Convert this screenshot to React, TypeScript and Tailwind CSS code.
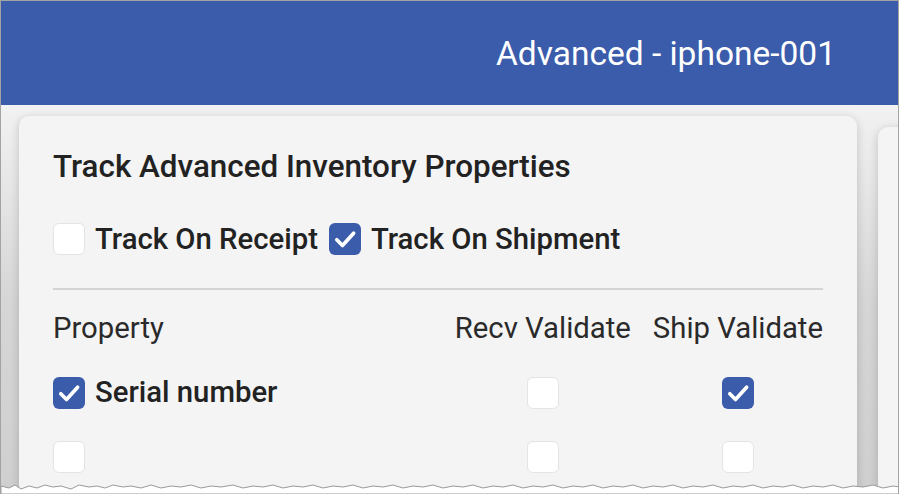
import React from "react";

function Box({ checked }: { checked?: boolean }) {
  return checked ? (
    <div className="w-[32px] h-[32px] shrink-0 rounded-[6px] bg-[#3b5bab] flex items-center justify-center">
      <svg width="32" height="32" viewBox="0 0 32 32" fill="none">
        <path d="M7.8 16.8l5.7 5.7L24.6 10.2" stroke="white" strokeWidth="3.7" strokeLinecap="round" strokeLinejoin="round" />
      </svg>
    </div>
  ) : (
    <div className="w-[32px] h-[32px] shrink-0 rounded-[6px] bg-white border border-[#e4e4e4]" />
  );
}

export default function App() {
  return (
    <div
      className="relative w-[899px] h-[494px] overflow-hidden bg-white border-x border-t border-[#a3a3a3] text-[#222]"
      style={{ fontFamily: "Roboto, 'Liberation Sans', sans-serif" }}
    >
      <div className="h-[104px] bg-[#3b5bab] flex items-center justify-end pr-[62px]">
        <span className="text-white text-[33.5px] leading-none pt-[2px]">Advanced - iphone-001</span>
      </div>
      <div className="h-[390px] bg-gradient-to-b from-[#f2f2f2] via-[#d6d6d6] to-[#cfcfcf] flex gap-[21px] pl-[18px]">
        <div className="mt-[11px] w-[838px] shrink-0 rounded-[10px] bg-[#f4f4f4] shadow-[0_2px_10px_rgba(0,0,0,0.18)] pl-[34px] pr-[34px] pt-[35px]">
          <div className="text-[31.4px] font-medium leading-none">Track Advanced Inventory Properties</div>
          <div className="flex items-center mt-[41px] text-[29.3px] leading-none">
            <Box />
            <span className="ml-[10px] font-medium">Track On Receipt</span>
            <div className="ml-[11px]"><Box checked /></div>
            <span className="ml-[10px] font-medium">Track On Shipment</span>
          </div>
          <div className="mt-[33px] h-[2px] bg-[#d4d4d4]" />
          <div className="grid grid-cols-[1fr_auto_auto] gap-x-[22px] items-center text-[29.3px] leading-none mt-[24px]">
            <div className="text-[#2a2a2a]">Property</div>
            <div className="text-[#2a2a2a]">Recv Validate</div>
            <div className="text-[#2a2a2a]">Ship Validate</div>
            <div className="flex items-center h-[32px] mt-[33px]">
              <Box checked />
              <span className="ml-[10px] font-medium">Serial number</span>
            </div>
            <div className="flex justify-center mt-[33px]"><Box /></div>
            <div className="flex justify-center mt-[33px]"><Box checked /></div>
            <div className="flex items-center mt-[32px]"><Box /></div>
            <div className="flex justify-center mt-[32px]"><Box /></div>
            <div className="flex justify-center mt-[32px]"><Box /></div>
          </div>
        </div>
        <div className="mt-[22px] w-[60px] shrink-0 rounded-[10px] bg-[#f4f4f4] shadow-[0_2px_10px_rgba(0,0,0,0.18)]" />
      </div>
      <svg className="absolute left-0 bottom-0" width="899" height="12" viewBox="0 0 899 12">
        <path
          d="M0 4 L8 6 L14 3 L20 7 L28 4 L36 6 L44 3 L52 5 L60 4 L70 7 L78 3 L88 5 L96 4 L104 6 L112 3 L122 5 L130 4 L140 6 L150 3 L160 6 L170 4 L180 5 L190 3 L200 6 L210 4 L220 5 L232 3 L242 6 L252 4 L262 5 L272 3 L282 6 L292 4 L302 5 L312 3 L322 6 L332 4 L342 5 L352 3 L362 6 L372 4 L382 5 L392 3 L402 6 L412 4 L422 5 L432 3 L442 6 L452 4 L462 5 L472 3 L482 6 L492 4 L502 5 L512 3 L522 6 L532 4 L542 5 L552 3 L562 6 L572 4 L582 5 L592 3 L602 6 L612 4 L622 5 L632 3 L642 6 L652 4 L662 5 L672 3 L682 6 L692 4 L702 5 L712 3 L722 6 L732 4 L742 5 L752 3 L762 6 L772 4 L782 5 L792 3 L802 6 L812 4 L822 5 L832 3 L842 6 L852 4 L862 5 L872 3 L882 6 L892 4 L899 5 L899 12 L0 12 Z"
          fill="white"
          stroke="#9a9a9a"
          strokeWidth="1"
        />
      </svg>
    </div>
  );
}
